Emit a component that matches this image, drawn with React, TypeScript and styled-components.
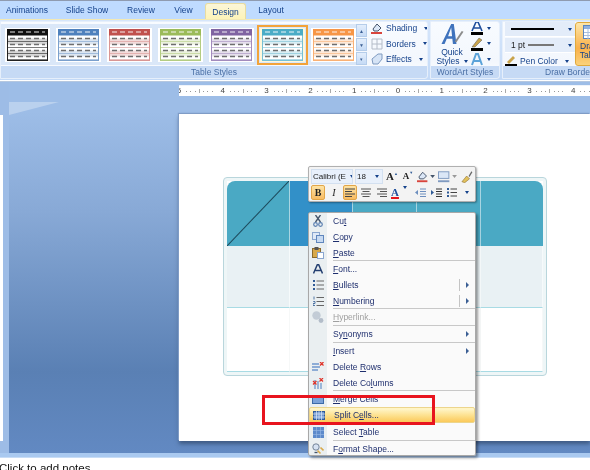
import React from 'react';
import styled, { createGlobalStyle } from 'styled-components';

const GlobalStyle = createGlobalStyle`
    html, body { margin: 0; padding: 0; background: #fff; }
    * { box-sizing: border-box; }
`

const navy = '#15428b';
const uiFont = `"Liberation Sans", Arial, sans-serif`;

const tabs = [
    { label: 'Animations', width: 54 },
    { label: 'Slide Show', width: 66 },
    { label: 'Review', width: 42 },
    { label: 'View', width: 43 },
    { label: 'Design', width: 41, active: true },
    { label: 'Layout', width: 50 },
];

const tableStyles = [
    { color: '#111111', rows: '#d8d8d8', frame: '#222222' },
    { color: '#4f81bd', rows: '#dce6f1', frame: '#7ba0cd' },
    { color: '#c0504d', rows: '#f2dcdb', frame: '#d99694' },
    { color: '#9bbb59', rows: '#ebf1de', frame: '#b3cc82' },
    { color: '#8064a2', rows: '#e6e0ec', frame: '#a28bbd' },
    { color: '#4bacc6', rows: '#daeef3', frame: '#78c0d4', selected: true },
    { color: '#f79646', rows: '#fde9d9', frame: '#f9b074' },
];

const rulerMarks = ['5', '4', '3', '2', '1', '0', '1', '2', '3', '4'];

type MenuEntry = {
    before: string; key?: string; after?: string; icon?: string;
    sep?: boolean; gap?: boolean; arrow?: boolean; split?: boolean; disabled?: boolean; hot?: boolean;
};

const menuItems: MenuEntry[] = [
    { before: 'Cu', key: 't', icon: 'cut' },
    { before: '', key: 'C', after: 'opy', icon: 'copy' },
    { before: '', key: 'P', after: 'aste', icon: 'paste' },
    { before: '', key: 'F', after: 'ont...', icon: 'font', sep: true },
    { before: '', key: 'B', after: 'ullets', icon: 'bullets', split: true, arrow: true },
    { before: '', key: 'N', after: 'umbering', icon: 'numbers', split: true, arrow: true },
    { before: '', key: 'H', after: 'yperlink...', icon: 'link', sep: true, disabled: true },
    { before: 'Sy', key: 'n', after: 'onyms', sep: true, gap: true, arrow: true },
    { before: '', key: 'I', after: 'nsert', sep: true, gap: true, arrow: true },
    { before: 'Delete ', key: 'R', after: 'ows', icon: 'delRows' },
    { before: 'Delete Co', key: 'l', after: 'umns', icon: 'delCols' },
    { before: '', key: 'M', after: 'erge Cells', icon: 'merge', sep: true },
    { before: 'Split C', key: 'e', after: 'lls...', icon: 'split', hot: true },
    { before: 'Select ', key: 'T', after: 'able', icon: 'select', gap: true },
    { before: 'F', key: 'o', after: 'rmat Shape...', icon: 'format', sep: true, gap: true },
];

const TableThumb = ({ color, rows, frame }: { color: string; rows: string; frame: string }) => (
    <svg width="41" height="32" viewBox="0 0 41 32">
        <rect x="0.5" y="0.5" width="40" height="31" fill="#fff" stroke={frame} />
        <rect x="0" y="0" width="41" height="6.5" fill={color} />
        {[12.5, 24.5].map(y => <rect key={y} x="1" y={y - 3} width="39" height="6" fill={rows} />)}
        {[9.5, 15.5, 21.5, 27.5].map(y => <line key={y} x1="1" x2="40" y1={y + 3} y2={y + 3} stroke={frame} strokeWidth="0.6" />)}
        {[3, 9.5, 15.5, 21.5, 27.5].map((y, i) => (
            <line key={y} x1="3" x2="38" y1={y} y2={y} stroke={i === 0 ? 'rgba(255,255,255,.6)' : '#6e6e6e'} strokeWidth="1.6" strokeDasharray="5 3" />
        ))}
    </svg>
);

const MenuIcon = ({ name }: { name?: string }) => {
    switch (name) {
        case 'cut':
            return <svg width="10" height="12" viewBox="0 0 10 12"><path d="M2.500 0l5 7M7.500 0l-5 7" stroke="#44546a" strokeWidth="1.300" fill="none" /><circle cx="2.500" cy="9.500" r="1.800" fill="none" stroke="#5b7fb0" strokeWidth="1.200" /><circle cx="7.500" cy="9.500" r="1.800" fill="none" stroke="#5b7fb0" strokeWidth="1.200" /></svg>;
        case 'copy':
            return <svg width="12" height="11" viewBox="0 0 12 11"><rect x="0.5" y="0.5" width="7" height="7" fill="#dfe9f7" stroke="#8aa6cf" /><rect x="4.500" y="3.500" width="7" height="7" fill="#c7daf2" stroke="#5f86bd" /></svg>;
        case 'paste':
            return <svg width="12" height="12" viewBox="0 0 12 12"><rect x="0.5" y="1.500" width="8" height="9" fill="#d8a94a" stroke="#8a6a2c" /><rect x="2.500" y="0" width="4" height="3" fill="#555" /><rect x="5.500" y="5.500" width="6" height="6" fill="#fff" stroke="#8aa6cf" /></svg>;
        case 'font':
            return <svg width="10" height="10" viewBox="0 0 10 10"><path d="M.5 9.500L4.300.8h1.400l3.800 8.700M2.500 6.500h5" stroke="#243f70" strokeWidth="1.500" fill="none" /></svg>;
        case 'bullets':
            return <svg width="11" height="10" viewBox="0 0 11 10"><g fill="#2f5a96"><rect x="0" y="0" width="2" height="2" /><rect x="0" y="4" width="2" height="2" /><rect x="0" y="8" width="2" height="2" /></g><path d="M3.500 1h7.500M3.500 5h7.500M3.500 9h7.500" stroke="#666" /></svg>;
        case 'numbers':
            return <svg width="11" height="11" viewBox="0 0 11 11"><path d="M1 .5v3M.2 5.500h1.800v2h-2v2h2" stroke="#2f5a96" fill="none" strokeWidth=".8" /><path d="M3.500 1.500h7.500M3.500 5.500h7.500M3.500 9.500h7.500" stroke="#666" /></svg>;
        case 'link':
            return <svg width="12" height="12" viewBox="0 0 12 12"><circle cx="4.500" cy="4.500" r="4.200" fill="#c3ccd6" /><circle cx="9" cy="9.500" r="2.400" fill="#b3bdc9" /></svg>;
        case 'delRows':
            return <svg width="12" height="10" viewBox="0 0 12 10"><path d="M0 2h7M0 5h8M0 8h6" stroke="#6f97cd" strokeWidth="1.300" /><path d="M8 0l3.500 3.500M11.500 0L8 3.500" stroke="#e0352b" strokeWidth="1.300" /></svg>;
        case 'delCols':
            return <svg width="12" height="11" viewBox="0 0 12 11"><path d="M3 2v9M6 3v8M9 5v6" stroke="#6f97cd" strokeWidth="1.300" /><path d="M1 3l3.500 3.500M4.500 3L1 6.500M7.500 0l3.500 3.500M11 0L7.500 3.500" stroke="#e0352b" strokeWidth="1.200" /></svg>;
        case 'merge':
            return <svg width="12" height="9" viewBox="0 0 12 9"><rect x="0.500" y="0.500" width="11" height="8" fill="#7ca2d8" stroke="#3c6aa8" /></svg>;
        case 'split':
            return <svg width="12" height="9" viewBox="0 0 12 9"><rect x="0.500" y="0.500" width="11" height="8" fill="#6f97d0" stroke="#2f5a96" /><path d="M3.500 0v9M6 0v9M8.500 0v9M0 3h12M0 6h12" stroke="#dbe7f7" strokeWidth="0.700" /></svg>;
        case 'select':
            return <svg width="11" height="11" viewBox="0 0 11 11"><rect width="11" height="11" fill="#5d8acb" /><path d="M3.500 0v11M7.500 0v11M0 3.500h11M0 7.500h11" stroke="#9cbbe6" strokeWidth="0.600" /></svg>;
        case 'format':
            return <svg width="12" height="12" viewBox="0 0 12 12"><circle cx="4" cy="4" r="3.200" fill="#d6e2f2" stroke="#5a6b80" strokeWidth=".8" /><path d="M5.500 7.500l3 3M8.500 4.500l3 3" stroke="#d8a94a" strokeWidth="1.600" /><path d="M2.500 9.500h3" stroke="#44546a" strokeWidth="1.300" /></svg>;
        default:
            return null;
    }
};

const Caret = styled.span`
    display: inline-block;
    width: 0;
    height: 0;
    margin-left: 4px;
    border-left: 2.500px solid transparent;
    border-right: 2.500px solid transparent;
    border-top: 3px solid ${navy};
    vertical-align: middle;
`

export default function App() {
    return (
        <Page>
            <GlobalStyle />
            <TabBar>
                {tabs.map(t => <Tab key={t.label} $active={t.active} $width={t.width}>{t.label}</Tab>)}
            </TabBar>
            <Ribbon>
                <Group $width={428}>
                    <GroupBody>
                        <Gallery>
                            {tableStyles.map(s => (
                                <ThumbFrame key={s.color} $selected={s.selected}>
                                    <TableThumb color={s.color} rows={s.rows} frame={s.frame} />
                                </ThumbFrame>
                            ))}
                        </Gallery>
                        <ScrollColumn>
                            <ScrollButton>▲</ScrollButton>
                            <ScrollButton>▼</ScrollButton>
                            <ScrollButton>▾</ScrollButton>
                        </ScrollColumn>
                        <ShadingColumn>
                            <SmallCommand>
                                <svg width="12" height="12" viewBox="0 0 12 12"><path d="M2 7l4-5 4 4-3 3H3z" fill="#dbe7f7" stroke="#44546a" /><rect y="10" width="11" height="2" fill="#d8443c" /></svg>
                                Shading<Caret />
                            </SmallCommand>
                            <SmallCommand>
                                <svg width="12" height="12" viewBox="0 0 12 12"><path d="M1 1h10v10H1zM6 1v10M1 6h10" fill="none" stroke="#b4bcc8" /></svg>
                                Borders<Caret />
                            </SmallCommand>
                            <SmallCommand>
                                <svg width="12" height="12" viewBox="0 0 12 12"><path d="M1 6l6-5h4v5l-4 5H2z" fill="#d6e4f6" stroke="#7f9ac0" /></svg>
                                Effects<Caret />
                            </SmallCommand>
                        </ShadingColumn>
                    </GroupBody>
                    <GroupLabel>Table Styles</GroupLabel>
                </Group>
                <Group $width={70}>
                    <GroupBody>
                        <QuickStyles>
                            <svg width="25" height="25" viewBox="0 0 25 25">
                                <path d="M0 24L11 1h3l3 23h-4l-.7-6H6l-2.500 6zM7.500 15h4.500L11 5z" fill="#3f73bd" fillRule="evenodd" />
                                <path d="M15 21l8-12 2 1-8 12z" fill="#8c8c8c" />
                            </svg>
                            <QuickLabel>Quick<br />Styles<Caret /></QuickLabel>
                        </QuickStyles>
                        <WordArtColumn>
                            <WordArtButton>
                                <svg width="12" height="14" viewBox="0 0 12 14"><path d="M1 10L5 1h2l4 9M3 7h6" stroke="#1f4e9c" strokeWidth="1.600" fill="none" /><rect y="11" width="12" height="3" fill="#000" /></svg>
                                <Caret />
                            </WordArtButton>
                            <WordArtButton>
                                <svg width="12" height="14" viewBox="0 0 12 14"><path d="M1 10L8 1l3 2-7 7z" fill="#c9a44c" stroke="#555" strokeWidth=".5" /><rect y="11" width="12" height="3" fill="#000" /></svg>
                                <Caret />
                            </WordArtButton>
                            <WordArtButton>
                                <svg width="12" height="13" viewBox="0 0 12 13"><path d="M1 12L5 1h2l4 11M3 8h6" stroke="#5ba3d9" strokeWidth="2" fill="none" /></svg>
                                <Caret />
                            </WordArtButton>
                        </WordArtColumn>
                    </GroupBody>
                    <GroupLabel>WordArt Styles</GroupLabel>
                </Group>
                <Group $width={100}>
                    <GroupBody>
                        <PenColumn>
                            <LinePicker>
                                <LineSample />
                                <Caret />
                            </LinePicker>
                            <LinePicker>
                                <PtLabel>1 pt</PtLabel>
                                <LineSample $thin />
                                <Caret />
                            </LinePicker>
                            <SmallCommand>
                                <svg width="12" height="12" viewBox="0 0 12 12"><path d="M2 7l6-6 2 2-6 6z" fill="#c9a44c" /><rect y="9" width="12" height="3" fill="#000" /></svg>
                                Pen Color<Caret />
                            </SmallCommand>
                        </PenColumn>
                        <DrawTable>
                            <svg width="14" height="14" viewBox="0 0 14 14"><rect x=".5" y=".5" width="13" height="13" fill="#fff" stroke="#5b86c0" /><rect x="1" y="1" width="12" height="3" fill="#8fb0de" /><path d="M5 4v10M9 4v10M1 7.500h12M1 10.500h12" stroke="#a9bfdf" /></svg>
                            <span>Draw</span>
                            <span>Table</span>
                        </DrawTable>
                    </GroupBody>
                    <DrawLabel>Draw Borders</DrawLabel>
                </Group>
            </Ribbon>
            <Workspace>
                <SideRuler />
                <SideStrip />
                <Stage>
                    <Glare />
                    <Ruler>
                        {rulerMarks.map((m, i) => (
                            <RulerCell key={i}>
                                <RulerNumber>{m}</RulerNumber>
                                <RulerTicks>
                                    <i /><i /><i /><RulerTick /><i /><i /><i />
                                </RulerTicks>
                            </RulerCell>
                        ))}
                    </Ruler>
                    <Slide>
                        <TableFrame>
                            <Handle $corner="tl" />
                            <Handle $corner="tr" />
                            <TableGrid>
                                <HeadCell $first>
                                    <DiagonalLine viewBox="0 0 62 64" preserveAspectRatio="none"><line x1="62" y1="0" x2="0" y2="64" stroke="#1d4a5c" strokeWidth="1" /></DiagonalLine>
                                </HeadCell>
                                <HeadCell $selected />
                                <HeadCell />
                                <HeadCell />
                                <HeadCell $last />
                                {[0, 1, 2, 3, 4].map(i => <BodyCell key={i} />)}
                                {[0, 1, 2, 3, 4].map(i => <BottomCell key={i} />)}
                            </TableGrid>
                        </TableFrame>
                    </Slide>
                </Stage>
            </Workspace>
            <NotesBand />
            <Notes>Click to add notes</Notes>

            <MiniToolbar>
                <MiniRow>
                    <MiniSelect $width={42}>Calibri (E<Caret /></MiniSelect>
                    <MiniSelect $width={28}>18<Caret /></MiniSelect>
                    <MiniGlyph $size={11}>A<sup>▲</sup></MiniGlyph>
                    <MiniGlyph $size={9}>A<sup>▼</sup></MiniGlyph>
                    <svg width="20" height="13" viewBox="0 0 20 13"><path d="M2 7l4-5 4 4-3 3H3z" fill="#dbe7f7" stroke="#44546a" /><rect y="10.500" width="11" height="2" fill="#d8443c" /><path d="M14 5h5l-2.500 3z" fill="#44546a" /></svg>
                    <svg width="22" height="13" viewBox="0 0 22 13"><rect x=".5" y="1.500" width="11" height="7" fill="#dbe7f7" stroke="#7f9ac0" /><path d="M0 11.500h12" stroke="#7f9ac0" strokeWidth="2" /><path d="M15 5h5l-2.500 3z" fill="#999" /></svg>
                    <svg width="13" height="13" viewBox="0 0 13 13"><path d="M1 12l5-6 3 3-5 4z" fill="#e2c15c" stroke="#8a6a2c" strokeWidth=".6" /><path d="M8 6l3-5 1 1-3 5z" fill="#666" /></svg>
                </MiniRow>
                <MiniRow>
                    <MiniButton $active><b>B</b></MiniButton>
                    <MiniButton><em>I</em></MiniButton>
                    <MiniButton $active>
                        <svg width="10" height="9" viewBox="0 0 10 9"><path d="M0 1h10M0 3.500h7M0 6h10M0 8.500h7" stroke="#444" /></svg>
                    </MiniButton>
                    <MiniButton>
                        <svg width="10" height="9" viewBox="0 0 10 9"><path d="M0 1h10M1.500 3.500h7M0 6h10M1.500 8.500h7" stroke="#555" /></svg>
                    </MiniButton>
                    <MiniButton>
                        <svg width="10" height="9" viewBox="0 0 10 9"><path d="M0 1h10M3 3.500h7M0 6h10M3 8.500h7" stroke="#555" /></svg>
                    </MiniButton>
                    <MiniColorA>A<Caret /></MiniColorA>
                    <MiniButton>
                        <svg width="11" height="9" viewBox="0 0 11 9"><path d="M5 1h6M5 3.500h6M5 6h6M5 8.500h6" stroke="#6d8fbf" /><path d="M3 2L0 4.500 3 7z" fill="#6d8fbf" /></svg>
                    </MiniButton>
                    <MiniButton>
                        <svg width="11" height="9" viewBox="0 0 11 9"><path d="M5 1h6M5 3.500h6M5 6h6M5 8.500h6" stroke="#333" /><path d="M0 2l3 2.500L0 7z" fill="#2f5a96" /></svg>
                    </MiniButton>
                    <MiniButton>
                        <svg width="10" height="9" viewBox="0 0 10 9"><g fill="#2f5a96"><rect width="2" height="2" /><rect y="3.500" width="2" height="2" /><rect y="7" width="2" height="2" /></g><path d="M3.500 1h6.500M3.500 4.500h6.500M3.500 8h6.500" stroke="#444" /></svg>
                    </MiniButton>
                    <Caret />
                </MiniRow>
            </MiniToolbar>

            <ContextMenu>
                {menuItems.map(item => (
                    <MenuRow key={item.before + item.key} $sep={item.sep} $gap={item.gap} $hot={item.hot} $disabled={item.disabled}>
                        <IconSlot><MenuIcon name={item.icon} /></IconSlot>
                        <MenuText>{item.before}<u>{item.key}</u>{item.after}</MenuText>
                        {item.split && <SplitBar />}
                        {item.arrow && <SubArrow />}
                    </MenuRow>
                ))}
            </ContextMenu>
            <RedBox />
        </Page>
    );
}

const Page = styled.div`
    position: relative;
    width: 590px;
    height: 470px;
    overflow: hidden;
    display: flex;
    flex-direction: column;
    background: #fff;
    font-family: ${uiFont};
    filter: blur(.3px);
`

const TabBar = styled.div`
    height: 19px;
    flex: none;
    display: flex;
    align-items: flex-end;
    border-top: 1px solid #8f9bb0;
    background: #bfdbff;
`

const Tab = styled.div<{ $active?: boolean; $width: number }>`
    width: ${p => p.$width}px;
    height: ${p => (p.$active ? 16 : 18)}px;
    flex: none;
    display: flex;
    align-items: center;
    justify-content: center;
    font-size: 8.500px;
    color: ${navy};
    border-radius: 3px 3px 0 0;
    ${p => p.$active && `
        border: 1px solid #e8dca0;
        border-bottom: none;
        background: linear-gradient(#fbf6d8, #fdf3b8);
    `}
`

const Ribbon = styled.div`
    height: 61px;
    flex: none;
    display: flex;
    gap: 2px;
    padding: 1px 0;
    border-top: 1px solid #f3e9b4;
    background: linear-gradient(#d6e6fb, #c4daf7);
`

const Group = styled.div<{ $width: number }>`
    width: ${p => p.$width}px;
    flex: none;
    display: flex;
    flex-direction: column;
    border-radius: 0 3px 3px 0;
    border: 1px solid #e6effb;
    background: linear-gradient(#f8fbff, #f3f7fd 70%, #fff);
    overflow: hidden;
`

const GroupBody = styled.div`
    flex: 1;
    display: flex;
    min-height: 0;
`

const GroupLabel = styled.div`
    height: 12px;
    flex: none;
    text-align: center;
    line-height: 12px;
    font-size: 8.500px;
    color: #4a6fa5;
    background: #c6daf5;
`

const DrawLabel = styled(GroupLabel)`
    text-align: left;
    padding-left: 42px;
    white-space: nowrap;
`

const Gallery = styled.div`
    display: flex;
    align-items: center;
    gap: 6px;
    width: 356px;
    height: 41px;
    margin-top: 2px;
    padding-left: 4px;
    background: #dae7f8;
`

const ThumbFrame = styled.div<{ $selected?: boolean }>`
    width: 45px;
    height: 34px;
    flex: none;
    display: flex;
    align-items: center;
    justify-content: center;
    background: #fff;
    ${p => p.$selected && `
        outline: 2px solid #f2a33a;
        outline-offset: 1px;
        background: #fff8dc;
    `}
`

const ScrollColumn = styled.div`
    width: 11px;
    height: 41px;
    margin-top: 2px;
    flex: none;
    display: flex;
    flex-direction: column;
    gap: 1px;
`

const ScrollButton = styled.div`
    flex: 1;
    display: flex;
    align-items: center;
    justify-content: center;
    font-size: 5px;
    color: #3b5f94;
    background: linear-gradient(#e3eefc, #c5daf5);
    border: 1px solid #b5cdea;
`

const ShadingColumn = styled.div`
    display: flex;
    flex-direction: column;
    gap: 1.500px;
    margin-top: -1px;
    padding-left: 4px;
`

const SmallCommand = styled.div`
    display: flex;
    align-items: center;
    gap: 3px;
    height: 14px;
    flex: none;
    white-space: nowrap;
    font-size: 8.500px;
    color: ${navy};
`

const QuickStyles = styled.div`
    width: 38px;
    display: flex;
    flex-direction: column;
    align-items: center;
    padding-top: 1px;
    margin-left: 2px;
`

const QuickLabel = styled.div`
    margin-top: 3px;
    text-align: center;
    font-size: 8.500px;
    line-height: 9px;
    color: ${navy};
    white-space: nowrap;
`

const WordArtColumn = styled.div`
    display: flex;
    flex-direction: column;
    gap: 1.500px;
    margin-top: -1px;
`

const WordArtButton = styled.div`
    display: flex;
    align-items: center;
    height: 14px;
    flex: none;
`

const PenColumn = styled.div`
    width: 72px;
    flex: none;
    display: flex;
    flex-direction: column;
    padding-left: 2px;
`

const LinePicker = styled.div`
    height: 15px;
    flex: none;
    display: flex;
    align-items: center;
    justify-content: flex-end;
    gap: 2px;
    padding: 0 3px 0 6px;
    margin-bottom: 1px;
    background: #e3ecf9;
    border-bottom: 1px solid #fff;
`

const LineSample = styled.div<{ $thin?: boolean }>`
    flex: 1;
    height: ${p => (p.$thin ? 2 : 1.500)}px;
    margin: 0 8px 0 ${p => (p.$thin ? 1 : 0)}px;
    background: ${p => (p.$thin ? '#777' : '#000')};
`

const PtLabel = styled.span`
    font-size: 8.500px;
    color: #222;
    white-space: nowrap;
`

const DrawTable = styled.div`
    width: 30px;
    flex: none;
    height: 44px;
    display: flex;
    flex-direction: column;
    align-items: center;
    padding-top: 2px;
    font-size: 8.500px;
    line-height: 9px;
    color: ${navy};
    border: 1px solid #e0a93c;
    border-radius: 3px;
    background: linear-gradient(#fde6a8, #f9b04a 60%, #fbd27a);
    svg { margin-bottom: 3px; }
`

const Workspace = styled.div`
    height: 372px;
    flex: none;
    display: flex;
    margin-top: 1px;
    border-top: 1px solid #b5c7df;
    background: #9dbce6;
`

const SideRuler = styled.div`
    width: 3px;
    flex: none;
    margin: 33px 0 12px;
    background: #fff;
`

const SideStrip = styled.div`
    width: 6px;
    flex: none;
`

const Stage = styled.div`
    position: relative;
    flex: 1;
    min-width: 0;
    background: linear-gradient(#9dbde7 8%, #88a9d6 35%, #5a80b4 78%, #6289c2);
`

const Glare = styled.div`
    position: absolute;
    left: 0;
    top: 20px;
    width: 50px;
    height: 13px;
    background: rgba(255, 255, 255, .3);
    clip-path: polygon(0 0, 100% 0, 0 100%);
`

const Ruler = styled.div`
    margin: 3px 0 0 170px;
    height: 11px;
    display: flex;
    overflow: hidden;
    background: #fff;
    border-top: 1px solid #eef3fa;
`

const RulerCell = styled.div`
    width: 43.800px;
    flex: none;
    display: flex;
    align-items: center;
    gap: 3px;
    &:first-child { margin-left: -4px; }
`

const RulerNumber = styled.span`
    width: 8px;
    flex: none;
    text-align: center;
    font-size: 8px;
    line-height: 10px;
    color: #444;
`

const RulerTicks = styled.div`
    flex: 1;
    display: flex;
    align-items: center;
    justify-content: space-between;
    padding-right: 6px;
    i {
        width: 1px;
        height: 1px;
        background: #999;
    }
`

const RulerTick = styled.b`
    width: 1px;
    height: 4px;
    background: #aaa;
`

const Slide = styled.div`
    height: 327px;
    margin: 18px 0 0 170px;
    padding: 63px 0 0 44px;
    background: #fff;
    box-shadow: -1px -1px 1px #7f9cc6, 0 3px 4px rgba(40, 60, 90, .6);
`

const TableFrame = styled.div`
    position: relative;
    width: 324px;
    height: 199px;
    padding: 3px;
    border: 1px solid #b9d6dc;
    border-radius: 4px;
    background: #eef6f7;
`

const Handle = styled.span<{ $corner: 'tl' | 'tr' }>`
    position: absolute;
    top: 1px;
    ${p => (p.$corner === 'tl' ? 'left: 1px;' : 'right: 1px;')}
    width: 4px;
    height: 4px;
    background: radial-gradient(circle, #5d8a94 40%, transparent 45%) 0 0 / 2px 2px;
`

const TableGrid = styled.div`
    display: grid;
    grid-template-columns: 63px 63px 64px 64px 62px;
    grid-template-rows: 65px 62px 64px;
    height: 191px;
    background: #fff;
`

const HeadCell = styled.div<{ $selected?: boolean; $first?: boolean; $last?: boolean }>`
    position: relative;
    background: ${p => (p.$selected ? '#3290c8' : '#4aa9c4')};
    border-right: ${p => (p.$last ? 'none' : '1px solid #a8d5e2')};
    border-top-left-radius: ${p => (p.$first ? '8px' : '0')};
    border-top-right-radius: ${p => (p.$last ? '8px' : '0')};
`

const DiagonalLine = styled.svg`
    position: absolute;
    inset: 0;
    width: 100%;
    height: 100%;
`

const BodyCell = styled.div`
    background: #e9f1f4;
    border-right: 1px solid #f6fafb;
    border-bottom: 1px solid #a8dbe4;
`

const BottomCell = styled.div`
    background: #fff;
    border-right: 1px solid #f6f8f8;
    border-bottom: 1px solid #a8dbe4;
`

const NotesBand = styled.div`
    height: 5px;
    flex: none;
    background: #a9c9f0;
    border-bottom: 1px solid #c7dcf6;
`

const Notes = styled.div`
    padding-top: 3px;
    margin-left: -1px;
    font-size: 11.500px;
    line-height: 14px;
    color: #111;
    white-space: nowrap;
`

const MiniToolbar = styled.div`
    position: absolute;
    left: 308px;
    top: 166px;
    width: 168px;
    height: 36px;
    display: flex;
    flex-direction: column;
    justify-content: space-between;
    padding: 1px 2px;
    background: #f3f3f3;
    border: 1px solid #b0b0b0;
    border-radius: 2px;
    box-shadow: 1px 1px 2px rgba(0, 0, 0, .35);
`

const MiniRow = styled.div`
    height: 16px;
    display: flex;
    align-items: center;
    gap: 2px;
`

const MiniSelect = styled.div<{ $width: number }>`
    width: ${p => p.$width}px;
    height: 15px;
    flex: none;
    display: flex;
    align-items: center;
    justify-content: space-between;
    padding: 0 3px 0 1px;
    font-size: 8px;
    color: #222;
    white-space: nowrap;
    overflow: hidden;
    background: #e8f0fb;
    border: 1px solid #d3e0f0;
`

const MiniGlyph = styled.div<{ $size: number }>`
    width: 14px;
    flex: none;
    font-family: "Liberation Serif", serif;
    font-weight: 700;
    font-size: ${p => p.$size}px;
    line-height: 14px;
    text-align: center;
    color: #222;
    sup {
        font-size: 4px;
        vertical-align: 5px;
        line-height: 0;
        color: #2f5a96;
    }
`

const MiniButton = styled.div<{ $active?: boolean }>`
    width: 14px;
    height: 15px;
    flex: none;
    display: flex;
    align-items: center;
    justify-content: center;
    font-family: "Liberation Serif", serif;
    font-size: 10px;
    color: #222;
    border-radius: 2px;
    ${p => p.$active && `
        border: 1px solid #e2a648;
        background: linear-gradient(#fde3a4, #f8bb62);
    `}
`

const MiniColorA = styled.div`
    width: 20px;
    flex: none;
    display: flex;
    align-items: flex-start;
    font-family: "Liberation Serif", serif;
    font-weight: 700;
    font-size: 11px;
    line-height: 12px;
    color: #1f4e9c;
    text-decoration: underline solid #e3141c 2px;
    text-underline-offset: 1px;
`

const ContextMenu = styled.div`
    position: absolute;
    left: 308px;
    top: 212px;
    width: 168px;
    height: 244px;
    background: linear-gradient(90deg, #eaeff1 18px, #fafafa 18px);
    border: 1px solid #a8a8a8;
    border-radius: 2px;
    box-shadow: 2px 2px 3px rgba(0, 0, 0, .4);
`

const MenuRow = styled.div<{ $sep?: boolean; $gap?: boolean; $hot?: boolean; $disabled?: boolean }>`
    position: relative;
    height: 16px;
    display: flex;
    align-items: center;
    font-size: 8.500px;
    color: ${p => (p.$disabled ? '#a0a0a0' : '#1f2f6e')};
    margin-top: ${p => (p.$gap ? '1px' : '0')};
    ${p => p.$sep && `
        &::before {
            content: '';
            position: absolute;
            left: 24px;
            right: 0;
            top: -1px;
            height: 1px;
            background: #c8c8c8;
        }
    `}
    ${p => p.$hot && `
        border: 1px solid #ecd58c;
        border-radius: 2px;
        background: linear-gradient(#fff4c4 10%, #fde08c 55%, #fbc95a);
    `}
`

const IconSlot = styled.div`
    width: 18px;
    flex: none;
    display: flex;
    align-items: center;
    justify-content: center;
`

const MenuText = styled.span`
    margin-left: 6px;
    flex: 1;
    white-space: nowrap;
`

const SplitBar = styled.span`
    width: 1px;
    height: 12px;
    margin-right: 6px;
    background: #c4c4c4;
`

const SubArrow = styled.span`
    width: 0;
    height: 0;
    margin-right: 6px;
    border-top: 3px solid transparent;
    border-bottom: 3px solid transparent;
    border-left: 3px solid #3b5f94;
`

const RedBox = styled.div`
    position: absolute;
    left: 262px;
    top: 395px;
    width: 173px;
    height: 30px;
    border: 3px solid #e8141e;
`
